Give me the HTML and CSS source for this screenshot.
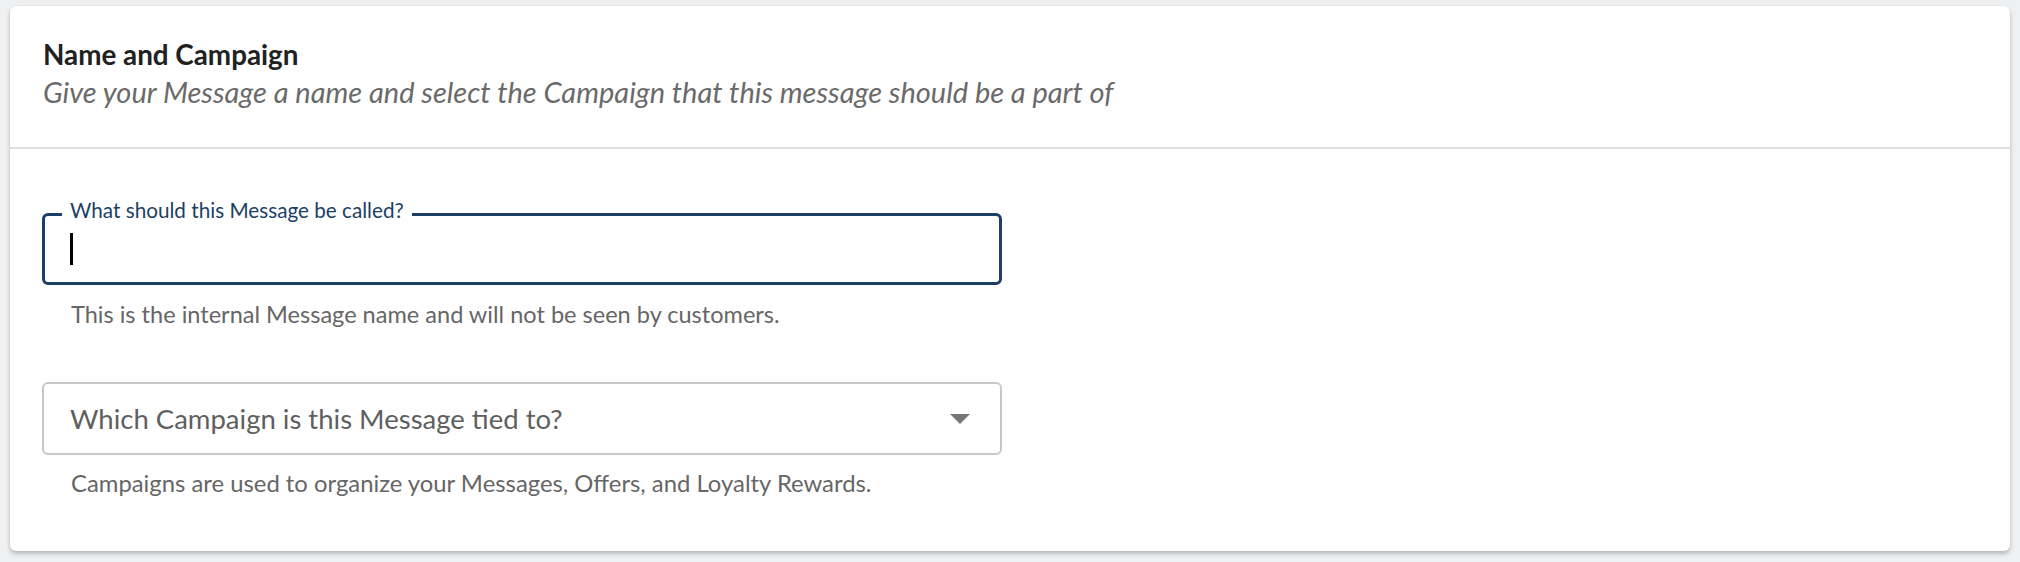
FILE: index.html
```html
<!DOCTYPE html>
<html lang="en">
<head>
<meta charset="utf-8">
<title>Name and Campaign</title>
<link rel="stylesheet" href="styles.css">
</head>
<body>
<main class="page">
  <section class="card">
    <header class="card-header">
      <h2 class="title">Name and Campaign</h2>
      <p class="subtitle">Give your Message a name and select the Campaign that this message should be a part of</p>
    </header>
    <div class="card-body">
      <div class="field">
        <div class="text-input is-focused">
          <label class="float-label">What should this Message be called?</label>
          <span class="caret"></span>
        </div>
        <p class="helper helper-name">This is the internal Message name and will not be seen by customers.</p>
      </div>
      <div class="field field-select">
        <div class="select">
          <span class="placeholder">Which Campaign is this Message tied to?</span>
          <svg class="arrow" width="20" height="10" viewBox="0 0 20 10" aria-hidden="true"><path d="M0 0h20L10 10z" fill="#757575"/></svg>
        </div>
        <p class="helper helper-campaign">Campaigns are used to organize your Messages, Offers, and Loyalty Rewards.</p>
      </div>
    </div>
  </section>
</main>
</body>
</html>
```
FILE: styles.css
```css
html, body {
  margin: 0;
  padding: 0;
}
body {
  background: #eef0f2;
  font-family: Lato, "Open Sans", "Liberation Sans", sans-serif;
}
.page {
  padding: 6px 10px 13px 10px;
}
.card {
  background: #ffffff;
  border-radius: 6px;
  box-shadow: 0 3px 4px rgba(0, 0, 0, 0.22), 0 0 2px rgba(0, 0, 0, 0.08);
}
.card-header {
  padding: 32px 33px 37px 33px;
  border-bottom: 2px solid #e0e0e0;
}
.title {
  margin: 0;
  font-size: 27.8px;
  line-height: 34px;
  font-weight: 700;
  color: #212121;
}
.subtitle {
  margin: 2px 0 0 0;
  font-size: 29px;
  line-height: 36px;
  font-style: italic;
  color: #6a6a6a;
}
.card-body {
  padding: 64px 32px 53px 32px;
}
.field {
  width: 960px;
}
.field-select {
  margin-top: 53px;
}
.text-input {
  position: relative;
  box-sizing: border-box;
  height: 72px;
  border: 3px solid #1c3f66;
  border-radius: 6px;
  display: flex;
  align-items: center;
  padding-left: 25px;
}
.float-label {
  position: absolute;
  left: 17px;
  top: -19px;
  padding: 0 8px;
  background: #ffffff;
  font-size: 20.7px;
  line-height: 26px;
  color: #1c3f66;
}
.caret {
  width: 3px;
  height: 32px;
  background: #000000;
}
.helper {
  margin: 13px 0 0 0;
  padding-left: 29px;
  font-size: 23.75px;
  line-height: 30px;
  color: #666666;
}
.helper-name {
  margin-top: 14px;
  font-size: 23.55px;
}
.helper-campaign {
  margin-top: 13px;
  font-size: 23.85px;
}
.select {
  box-sizing: border-box;
  height: 73px;
  border: 2px solid #c8c8c8;
  border-radius: 6px;
  display: flex;
  align-items: center;
  justify-content: space-between;
  padding: 0 30px 0 26px;
}
.placeholder {
  font-size: 27.5px;
  line-height: 34px;
  color: #5f5f5f;
}
.arrow {
  display: block;
  margin-top: 1px;
}
```
